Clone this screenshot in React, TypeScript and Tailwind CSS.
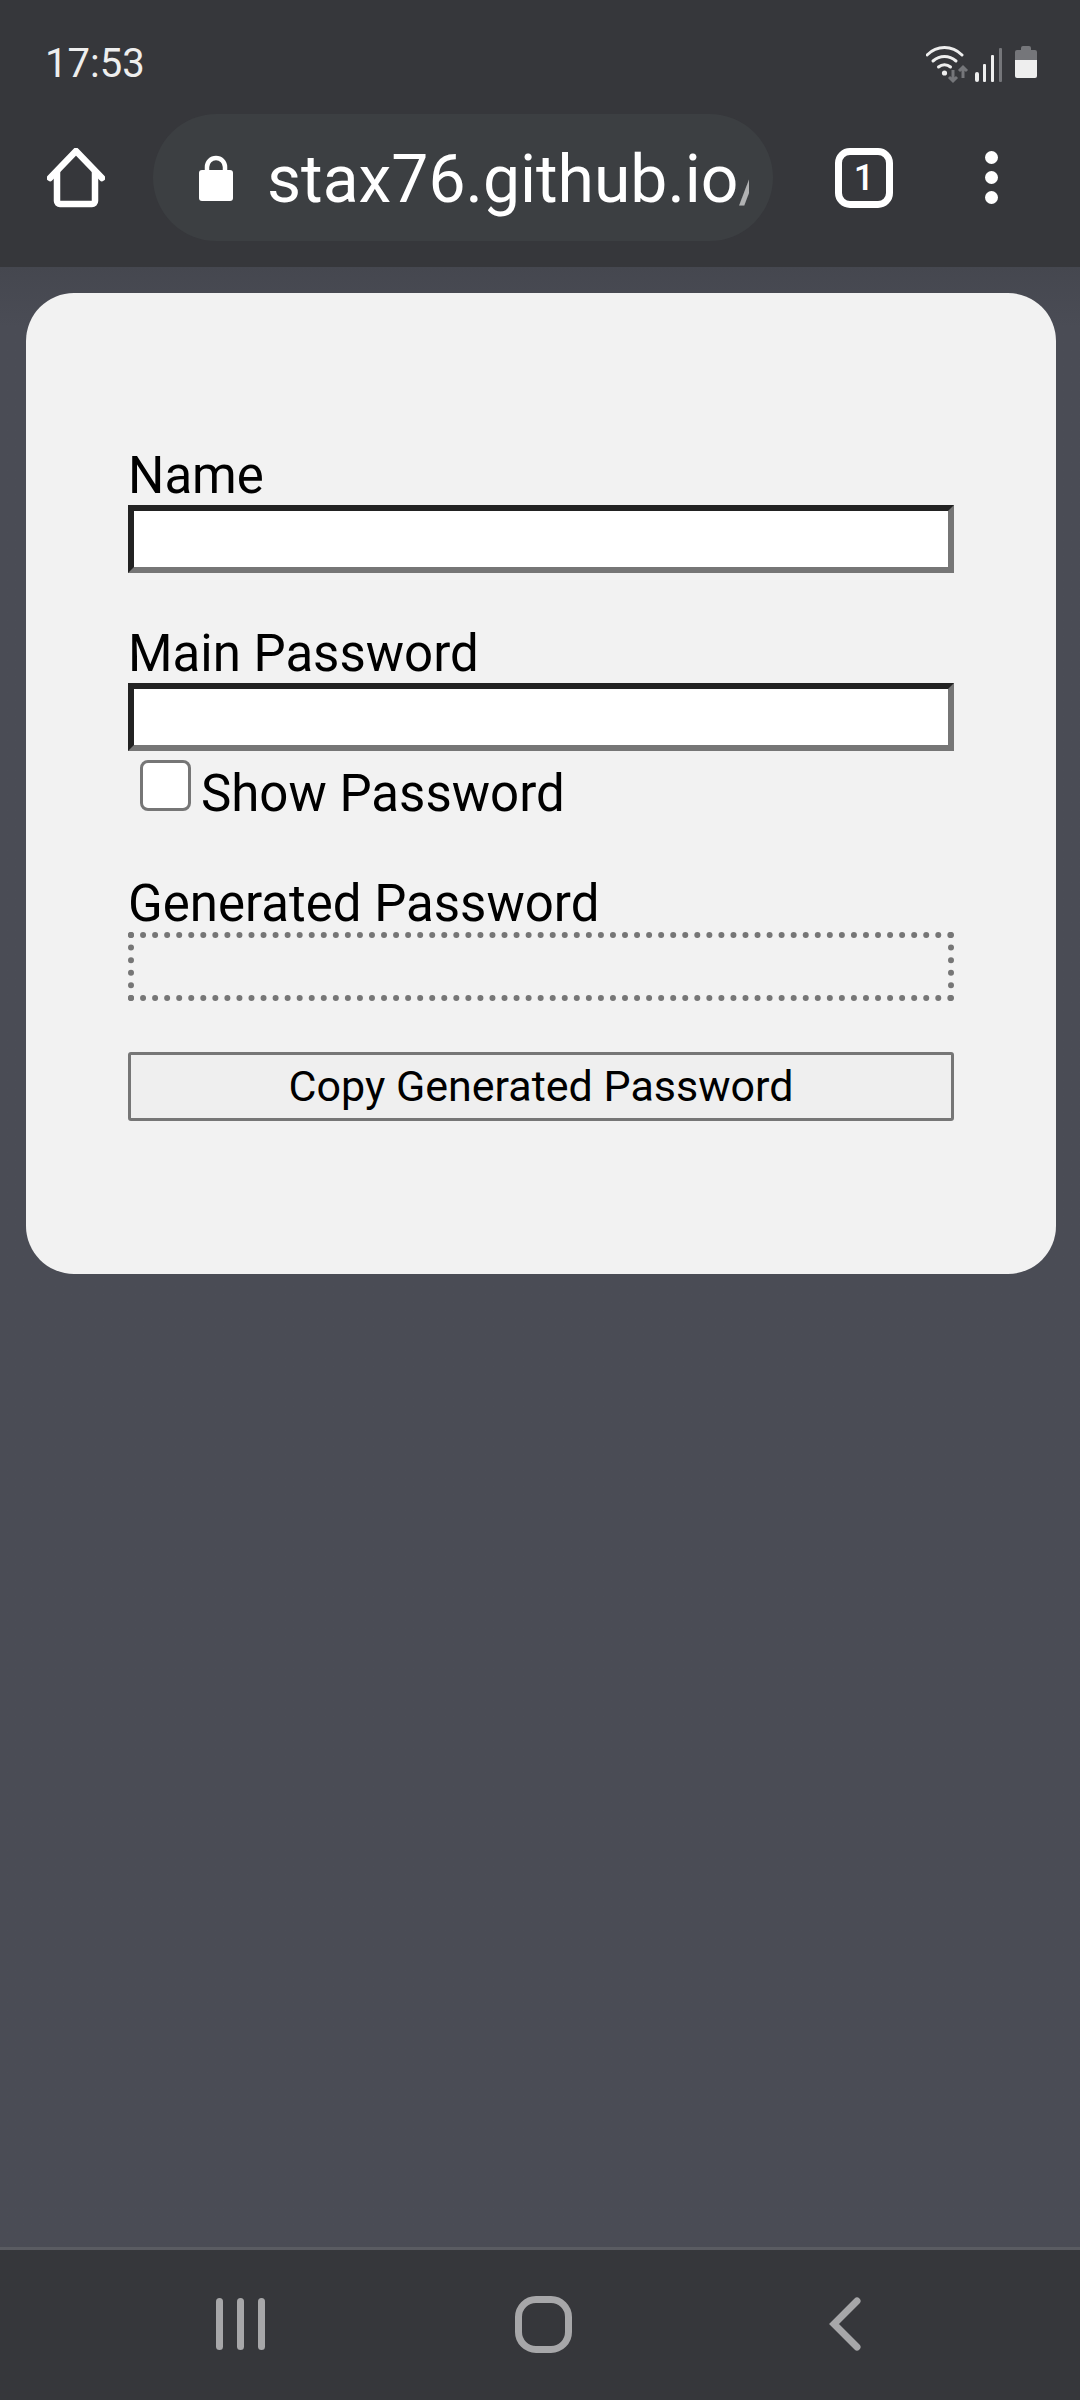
import React from 'react';

const roboto = "font-['Roboto',sans-serif]";

const StatusIcons = () => (
  <svg width="78" height="40" viewBox="0 0 78 40" fill="none">
    {/* wifi */}
    <g stroke="#eeeeee" strokeWidth="3" strokeLinecap="round">
      <path d="M1 10 C 11 0, 26 0, 36 10" />
      <path d="M7 16 C 14 10, 23 10, 30 16" />
      <path d="M12.5 22 C 16 19, 21 19, 24.5 22" />
    </g>
    <circle cx="18.5" cy="28" r="2.6" fill="#eeeeee" />
    {/* up and down arrows */}
    <g stroke="#75767a" strokeWidth="3" fill="none">
      <path d="M27 25 V36 M23 32 L27 36 L31 32" />
      <path d="M37 33 V22 M33 26 L37 22 L41 26" />
    </g>
    {/* signal bars */}
    <rect x="49" y="27" width="4" height="10" rx="2" fill="#eeeeee" />
    <rect x="57" y="19" width="3" height="18" rx="1" fill="#eeeeee" />
    <rect x="65" y="10" width="3" height="27" rx="1" fill="#eeeeee" />
    <rect x="73" y="3" width="3" height="34" rx="1" fill="#75767a" />
  </svg>
);

const Battery = () => (
  <svg width="22" height="33" viewBox="0 0 22 33">
    <path d="M6 3 a2 2 0 0 1 2 -2 h6 a2 2 0 0 1 2 2 v2 h4 a2 2 0 0 1 2 2 v8 h-22 v-8 a2 2 0 0 1 2 -2 h4 z" fill="#75767a" />
    <path d="M0 15 h22 v16 a2 2 0 0 1 -2 2 h-18 a2 2 0 0 1 -2 -2 z" fill="#eeeeee" />
  </svg>
);

const HomeIcon = () => (
  <svg width="58" height="60" viewBox="0 0 58 60" fill="none" stroke="#ffffff" strokeWidth="6.5" strokeLinecap="round" strokeLinejoin="round">
    <path d="M3 30 L29 3 L55 30" />
    <path d="M10 24 V53 a3 3 0 0 0 3 3 H45 a3 3 0 0 0 3 -3 V24" />
  </svg>
);

const LockIcon = () => (
  <svg width="34" height="46" viewBox="0 0 34 46" className="shrink-0">
    <path d="M8 17 V12 a9 9 0 0 1 18 0 V17" fill="none" stroke="#ffffff" strokeWidth="4.5" />
    <rect x="0" y="15" width="34" height="31" rx="3" fill="#ffffff" />
  </svg>
);

const Field = ({ label, children }: { label: string; children: React.ReactNode }) => (
  <div className="flex flex-col">
    <label className="h-[56px] text-[51px] leading-[54px] text-black">{label}</label>
    {children}
  </div>
);

const TextBox = () => (
  <input
    type="text"
    className="block w-full h-[68px] bg-white border-[6px] border-t-[#222222] border-l-[#222222] border-r-[#767676] border-b-[#767676] outline-none"
  />
);

export default function App() {
  return (
    <div className={`${roboto} w-[1080px] h-[2400px] flex flex-col bg-[#4a4c55] overflow-hidden`}>
      {/* status bar and browser toolbar */}
      <header className="h-[267px] shrink-0 flex flex-col bg-[#36373b]">
        <div className="h-[114px] shrink-0 flex items-start justify-between pl-[45px] pr-[43px] pt-[41px]">
          <span className="text-[40px] leading-[46px] text-[#eeeeee]">17:53</span>
          <div className="flex items-start gap-[11px] pt-[4px]">
            <StatusIcons />
            <Battery />
          </div>
        </div>
        <div className="flex items-center h-[127px]">
          <div className="w-[153px] shrink-0 pl-[47px]">
            <HomeIcon />
          </div>
          <div className="w-[620px] h-[127px] shrink-0 rounded-full bg-[#3c3f42] flex items-center pl-[46px]">
            <LockIcon />
            <div className="ml-[34px] w-[482px] h-[80px] pt-[2px] overflow-hidden whitespace-nowrap text-[66px] leading-[80px] text-white">
              stax76.github.io<span className="text-white/60">/</span>
            </div>
          </div>
          <div className="w-[58px] h-[60px] ml-[62px] shrink-0 rounded-[15px] border-[7px] border-white flex items-center justify-center text-[36px] font-medium text-white leading-none">
            1
          </div>
          <div className="ml-[92px] flex flex-col items-center gap-[7px]">
            <div className="w-[13px] h-[13px] rounded-full bg-white" />
            <div className="w-[13px] h-[13px] rounded-full bg-white" />
            <div className="w-[13px] h-[13px] rounded-full bg-white" />
          </div>
        </div>
      </header>

      {/* page */}
      <main className="flex-1 pl-[26px] pr-[24px] pt-[26px] bg-gradient-to-b from-[#45474f] to-[#4a4c55] to-[3%]">
        <div className="h-[981px] rounded-[48px] bg-[#f2f2f2] px-[102px] pt-[156px] flex flex-col">
          <Field label="Name">
            <TextBox />
          </Field>
          <div className="mt-[54px]">
            <Field label="Main Password">
              <TextBox />
            </Field>
          </div>
          <div className="flex items-start pl-[12px] mt-[9px]">
            <input
              type="checkbox"
              className="appearance-none w-[51px] h-[51px] shrink-0 bg-white rounded-[8px] border-[3px] border-[#767676]"
            />
            <span className="ml-[10px] mt-[6px] text-[51px] leading-[56px] text-black">Show Password</span>
          </div>
          <div className="mt-[54px] flex flex-col">
            <label className="text-[51px] leading-[56px] text-black">Generated Password</label>
            <div className="h-[69px] border-[6px] border-dotted border-[#767676]" />
          </div>
          <button className={`${roboto} mt-[51px] h-[69px] rounded-[3px] border-[3px] border-[#767676] bg-[#efefef] text-[43px] leading-none text-black`}>
            Copy Generated Password
          </button>
        </div>
      </main>

      {/* system nav */}
      <footer className="h-[153px] shrink-0 flex items-center pl-[216px] pb-[2px] border-t-[3px] border-[#5a5c62] bg-[#36373b]">
        <div className="flex gap-[14px]">
          <div className="w-[7px] h-[52px] rounded-full bg-[#a7a7a9]" />
          <div className="w-[7px] h-[52px] rounded-full bg-[#a7a7a9]" />
          <div className="w-[7px] h-[52px] rounded-full bg-[#a7a7a9]" />
        </div>
        <div className="ml-[250px] w-[57px] h-[57px] rounded-[21px] border-[7px] border-[#a7a7a9] shrink-0" />
        <svg width="32" height="54" viewBox="0 0 32 54" fill="none" stroke="#a7a7a9" strokeWidth="7" strokeLinecap="round" className="ml-[257px]">
          <path d="M28 4 L5 27 L28 50" />
        </svg>
      </footer>
    </div>
  );
}
